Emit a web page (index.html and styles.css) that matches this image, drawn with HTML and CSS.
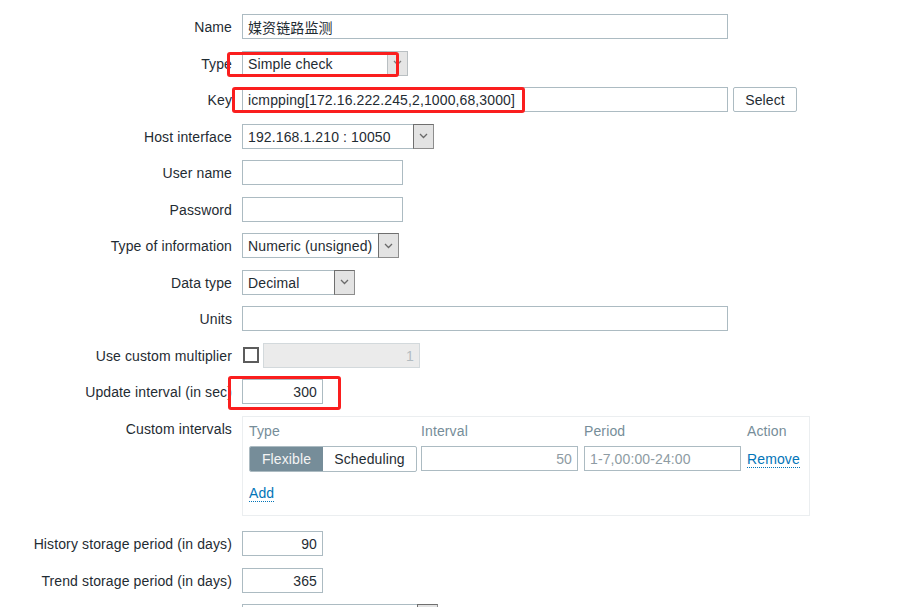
FILE: index.html
```html
<!DOCTYPE html>
<html lang="en">

<head>
    <meta charset="UTF-8">
    <title>Item</title>
    <link rel="stylesheet" href="styles.css">
</head>

<body>
    <div class="page">
        <div class="form">
            <div class="lbl">Name</div>
            <div class="fld"><input class="input wide" value="媒资链路监测"></div>

            <div class="lbl">Type</div>
            <div class="fld">
                <div class="select w-type"><span class="val">Simple check</span><span class="arrow hover"><svg width="9" height="6" viewBox="0 0 9 6"><polyline points="1,1 4.5,4.5 8,1" fill="none" stroke="#7d7d7d" stroke-width="1.3"/></svg></span></div>
            </div>

            <div class="lbl">Key</div>
            <div class="fld">
                <input class="input wide" value="icmpping[172.16.222.245,2,1000,68,3000]">
                <button class="btn">Select</button>
            </div>

            <div class="lbl">Host interface</div>
            <div class="fld">
                <div class="select w-host"><span class="val">192.168.1.210 : 10050</span><span class="arrow"><svg width="9" height="6" viewBox="0 0 9 6"><polyline points="1,1 4.5,4.5 8,1" fill="none" stroke="#6a6a6a" stroke-width="1.3"/></svg></span></div>
            </div>

            <div class="lbl">User name</div>
            <div class="fld"><input class="input short"></div>

            <div class="lbl">Password</div>
            <div class="fld"><input class="input short"></div>

            <div class="lbl">Type of information</div>
            <div class="fld">
                <div class="select w-info"><span class="val">Numeric (unsigned)</span><span class="arrow"><svg width="9" height="6" viewBox="0 0 9 6"><polyline points="1,1 4.5,4.5 8,1" fill="none" stroke="#6a6a6a" stroke-width="1.3"/></svg></span></div>
            </div>

            <div class="lbl">Data type</div>
            <div class="fld">
                <div class="select w-data"><span class="val">Decimal</span><span class="arrow"><svg width="9" height="6" viewBox="0 0 9 6"><polyline points="1,1 4.5,4.5 8,1" fill="none" stroke="#6a6a6a" stroke-width="1.3"/></svg></span></div>
            </div>

            <div class="lbl">Units</div>
            <div class="fld"><input class="input wide"></div>

            <div class="lbl">Use custom multiplier</div>
            <div class="fld">
                <span class="check"></span>
                <input class="input multi" value="1" disabled>
            </div>

            <div class="lbl">Update interval (in sec)</div>
            <div class="fld"><input class="input num" value="300"></div>

            <div class="lbl">Custom intervals</div>
            <div class="fld top">
                <div class="intervals">
                    <div class="itable">
                        <div class="ihead">Type</div>
                        <div class="ihead">Interval</div>
                        <div class="ihead">Period</div>
                        <div class="ihead">Action</div>

                        <div class="seg"><span class="on">Flexible</span><span>Scheduling</span></div>
                        <input class="input ival" value="50">
                        <input class="input iper" value="1-7,00:00-24:00">
                        <div><a class="link" href="#">Remove</a></div>
                    </div>
                    <div class="add"><a class="link" href="#">Add</a></div>
                </div>
            </div>

            <div class="lbl">History storage period (in days)</div>
            <div class="fld"><input class="input num" value="90"></div>

            <div class="lbl">Trend storage period (in days)</div>
            <div class="fld"><input class="input num" value="365"></div>

            <!-- next row, only its top edge is in view -->
            <div class="lbl"></div>
            <div class="fld">
                <div class="select w-show"><span class="val"></span><span class="arrow"></span></div>
            </div>
        </div>

        <!-- annotation boxes drawn over the form -->
        <div class="mark mark-type"></div>
        <div class="mark mark-key"></div>
        <div class="mark mark-update"></div>
    </div>
</body>

</html>
```

FILE: styles.css
```css
* {
    margin: 0;
    padding: 0;
    box-sizing: border-box;
}

body {
    background: #fff;
    font-family: "Liberation Sans", Arial, "Noto Sans CJK SC", sans-serif;
    font-size: 14px;
    letter-spacing: 0.12px;
    color: #1f2c33;
}

.page {
    position: relative;
    padding-top: 14px;
    height: 607px;
    overflow: hidden;
}

.form {
    display: grid;
    grid-template-columns: 232px 1fr;
    column-gap: 10px;
    row-gap: 11.5px;
}

.lbl {
    text-align: right;
    height: 25px;
    line-height: 26px;
    white-space: nowrap;
}

.fld {
    display: flex;
    align-items: center;
    gap: 5px;
    min-height: 25px;
}

.fld.top {
    align-items: flex-start;
}

.input {
    height: 25px;
    border: 1px solid #acbbc2;
    padding: 1px 5px 0 5px;
    font: inherit;
    letter-spacing: inherit;
    color: inherit;
    background: #fff;
    outline: none;
}

.wide {
    width: 486px;
}

.short {
    width: 161px;
}

.num {
    width: 81px;
    text-align: right;
}

.multi {
    width: 157px;
    margin-left: -1px;
    text-align: right;
    background: #ebebeb;
    border-color: #d3d9dc;
    color: #b3bcc1;
}

.check {
    width: 16px;
    height: 16px;
    margin-left: 1px;
    border: 2px solid #5c5c5c;
    background: #fff;
}

.btn {
    height: 25px;
    width: 64px;
    border: 1px solid #acbbc2;
    border-radius: 2px;
    background: #fff;
    font: inherit;
    letter-spacing: inherit;
    color: inherit;
}

.select {
    display: flex;
    height: 25px;
    border: 1px solid #acbbc2;
    background: #fff;
}

.select .val {
    flex: 1;
    padding: 1px 5px 0 5px;
    line-height: 23px;
    white-space: nowrap;
    overflow: hidden;
}

.select .arrow {
    width: 21px;
    margin: -1px -1px -1px 0;
    display: flex;
    align-items: center;
    justify-content: center;
    background: #e3e3e3;
    border: 1px solid #8d8d8d;
    border-top-color: #6f6f6f;
    border-left-color: #6f6f6f;
}

.select .arrow.hover {
    background: #e5e5e5;
    border-color: #b9bfc2;
}

.w-type {
    width: 166px;
}

.w-host {
    width: 192px;
}

.w-info {
    width: 157px;
}

.w-data {
    width: 113px;
}

.w-show {
    width: 196px;
}

.intervals {
    width: 568px;
    height: 100px;
    margin-bottom: 4px;
    border: 1px solid #ebeef0;
    padding: 5px 6px 0 6px;
}

.itable {
    display: grid;
    grid-template-columns: 172px 163px 163px auto;
    row-gap: 6px;
    align-items: center;
}

.ihead {
    color: #768d99;
    line-height: 18px;
}

.seg {
    display: flex;
    width: 168px;
    height: 26px;
    border: 1px solid #acbbc2;
    border-radius: 2px;
    overflow: hidden;
}

.seg span {
    flex: 1;
    text-align: center;
    line-height: 24px;
}

.seg .on {
    flex: 0 0 73px;
    background: #768d99;
    color: #f4f4f4;
}

.ival,
.iper {
    width: 157px;
    color: #8e9ba3;
}

.ival {
    text-align: right;
}

.add {
    margin-top: 12px;
    line-height: 18px;
}

.link {
    color: #0275b8;
    text-decoration: none;
    border-bottom: 1px dotted #0275b8;
}

.mark {
    position: absolute;
    border: 3px solid #fa1e1e;
    border-radius: 3px;
}

.mark-type {
    left: 227px;
    top: 52px;
    width: 172px;
    height: 25px;
}

.mark-key {
    left: 232px;
    top: 87px;
    width: 293px;
    height: 26px;
}

.mark-update {
    left: 228px;
    top: 376px;
    width: 113px;
    height: 34px;
}
```
